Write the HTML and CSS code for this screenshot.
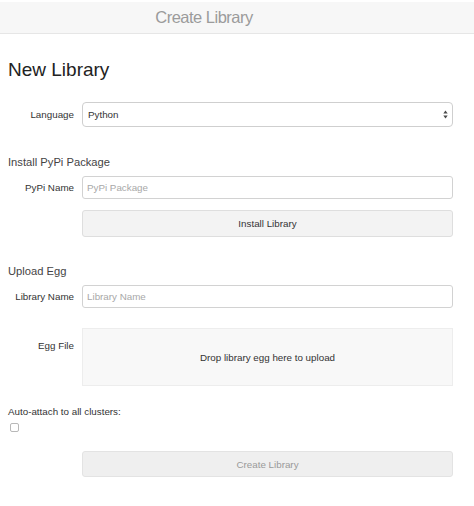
FILE: index.html
```html
<!DOCTYPE html>
<html lang="en">
<head>
<meta charset="utf-8">
<title>Create Library</title>
<link rel="stylesheet" href="styles.css">
</head>
<body>
<header class="topbar"><span class="topbar-title">Create Library</span></header>
<main class="page">
  <h1 class="page-title">New Library</h1>

  <div class="row row-select">
    <label class="row-label">Language</label>
    <div class="select">
      <span class="select-value">Python</span>
      <svg class="select-arrows" width="5" height="9" viewBox="0 0 5 9" aria-hidden="true">
        <polygon points="0.3,3.6 2.5,0.4 4.7,3.6" fill="#4a4a4a"/>
        <polygon points="0.3,5.4 2.5,8.6 4.7,5.4" fill="#4a4a4a"/>
      </svg>
    </div>
  </div>

  <h2 class="section-title section-pypi">Install PyPi Package</h2>
  <div class="row row-field">
    <label class="row-label">PyPi Name</label>
    <input class="field" type="text" placeholder="PyPi Package">
  </div>
  <div class="row row-install">
    <span class="row-label"></span>
    <button class="btn" type="button">Install Library</button>
  </div>

  <h2 class="section-title section-egg">Upload Egg</h2>
  <div class="row row-field">
    <label class="row-label">Library Name</label>
    <input class="field" type="text" placeholder="Library Name">
  </div>
  <div class="row row-drop">
    <label class="row-label row-label-top">Egg File</label>
    <div class="dropzone">Drop library egg here to upload</div>
  </div>

  <div class="attach">
    <div class="attach-label">Auto-attach to all clusters:</div>
    <input class="checkbox" type="checkbox">
  </div>

  <div class="row row-create">
    <span class="row-label"></span>
    <button class="btn btn-disabled" type="button">Create Library</button>
  </div>
</main>
</body>
</html>
```

FILE: styles.css
```css
html, body {
  margin: 0;
  padding: 0;
  background: #ffffff;
}

body {
  font-family: "Liberation Sans", Arial, Helvetica, sans-serif;
  color: #333333;
  font-size: 9.8px;
}

.topbar {
  margin-top: 2px;
  height: 31px;
  background: #f7f7f7;
  border-bottom: 1px solid #e6e6e6;
  display: flex;
  align-items: center;
  justify-content: center;
  padding-right: 66px;
}

.topbar-title {
  font-size: 16.5px;
  letter-spacing: -0.5px;
  color: #9b9b9b;
}

.page {
  padding: 0 21px 0 8px;
}

.page-title {
  margin: 25px 0 0;
  font-size: 19px;
  line-height: 22px;
  font-weight: normal;
  color: #222222;
}

.row {
  display: flex;
  align-items: center;
  gap: 8px;
}

.row-label {
  width: 66px;
  flex: none;
  text-align: right;
  font-size: 9.8px;
  color: #333333;
}

.row-label-top {
  align-self: flex-start;
  padding-top: 12px;
}

.row-select {
  margin-top: 21px;
}

.select {
  flex: 1;
  height: 25px;
  box-sizing: border-box;
  border: 1px solid #cfcfcf;
  border-radius: 4px;
  background: #ffffff;
  display: flex;
  align-items: center;
  justify-content: space-between;
  padding: 0 4px 0 5px;
  font-size: 9.8px;
  color: #333333;
}

.section-title {
  margin: 0;
  font-size: 11.2px;
  line-height: 14px;
  font-weight: normal;
  color: #444444;
}

.section-pypi {
  margin-top: 28px;
}

.section-egg {
  margin-top: 27px;
}

.row-field {
  margin-top: 7px;
}

.field {
  flex: 1;
  min-width: 0;
  height: 23px;
  box-sizing: border-box;
  border: 1px solid #d2d2d2;
  border-radius: 3px;
  padding: 0 4px;
  margin: 0;
  font-family: inherit;
  font-size: 9.8px;
  color: #333333;
  background: #ffffff;
  outline: none;
}

.field::placeholder {
  color: #a8a8a8;
}

.row-install {
  margin-top: 11px;
}

.btn {
  flex: 1;
  height: 27px;
  box-sizing: border-box;
  margin: 0;
  border: 1px solid #dedede;
  border-radius: 3px;
  background: #f3f3f3;
  font-family: inherit;
  font-size: 9.8px;
  color: #333333;
  padding: 0;
}

.row-drop {
  margin-top: 20px;
}

.dropzone {
  flex: 1;
  height: 58px;
  box-sizing: border-box;
  border: 1px solid #ededed;
  background: #f8f8f8;
  display: flex;
  align-items: center;
  justify-content: center;
  font-size: 9.8px;
  color: #333333;
}

.attach {
  margin-top: 20px;
}

.attach-label {
  font-size: 9.8px;
  line-height: 12px;
  color: #333333;
}

.checkbox {
  appearance: none;
  -webkit-appearance: none;
  display: block;
  width: 9px;
  height: 9px;
  box-sizing: border-box;
  margin: 5px 0 0 2px;
  border: 1px solid #b8b8b8;
  border-radius: 2px;
  background: #ffffff;
}

.row-create {
  margin-top: 19px;
}

.btn-disabled {
  height: 26px;
  background: #efefef;
  border-color: #e3e3e3;
  color: #9a9a9a;
}
```
